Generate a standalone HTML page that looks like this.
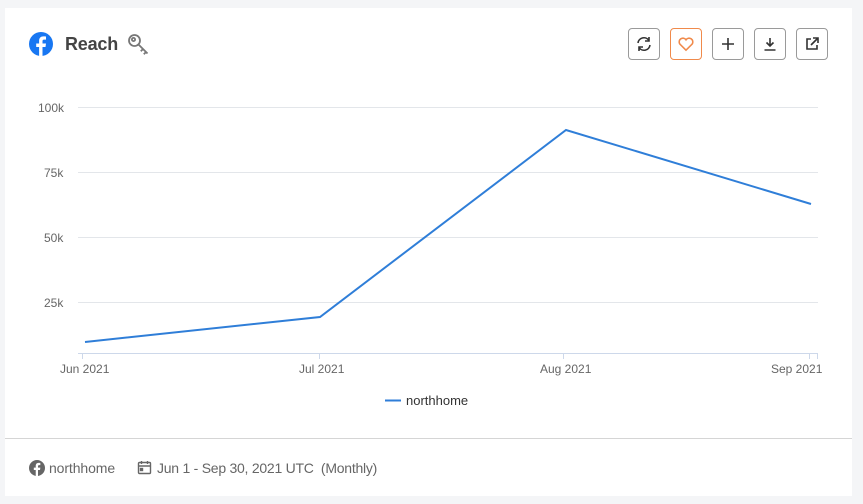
<!DOCTYPE html>
<html><head><meta charset="utf-8"><style>
body{margin:0;width:863px;height:504px;background:#f4f5f7;font-family:"Liberation Sans",sans-serif;position:relative;overflow:hidden}
.card{position:absolute;left:5px;top:8px;width:847px;height:488px;background:#fff}
.btn{position:absolute;top:28px;width:32px;height:32px;border:1px solid #9a9a9a;border-radius:4px;box-sizing:border-box;display:flex;align-items:center;justify-content:center}
.t{position:absolute;font-size:12px;color:#666}
</style></head><body>
<div class="card"></div>
<svg style="position:absolute;left:29px;top:32px" width="24" height="24" viewBox="0 0 24 24"><circle cx="12" cy="12" r="12" fill="#1877f2"/><path d="M13.5 24V15h3l.5-3.5h-3.5V9.3c0-1 .3-1.7 1.8-1.7H17V4.5c-.3 0-1.4-.1-2.6-.1-2.6 0-4.3 1.6-4.3 4.4v2.7H7.2V15h2.9v9z" fill="#fff"/></svg>
<div style="position:absolute;left:65px;top:34px;font-size:18px;font-weight:bold;color:#444;letter-spacing:-0.2px">Reach</div>
<svg style="position:absolute;left:127px;top:33px" width="24" height="24" viewBox="0 0 24 24" fill="none" stroke="#777" stroke-width="1.8"><circle cx="7.5" cy="7.5" r="5.5"/><circle cx="6.5" cy="6.5" r="1.6"/><path d="M11.5 11.5l9 9M16 16l-2.2 2.2M19 19l-2.2 2.2"/></svg>
<div class="btn" style="left:628px"><svg width="18" height="18" viewBox="0 0 18 18" fill="none" stroke="#333" stroke-width="1.6"><path d="M3 8a6 6 0 0 1 11-2.5M15 10a6 6 0 0 1-11 2.5M14 2v4h-4M4 16v-4h4"/></svg></div>
<div class="btn" style="left:670px;border-color:#f08a4b"><svg width="18" height="18" viewBox="0 0 16 16" fill="none" stroke="#f08a4b" stroke-width="1.4"><path d="M8 13.5L2.5 8a3 3 0 0 1 5.5-3.7A3 3 0 0 1 13.5 8z"/></svg></div>
<div class="btn" style="left:712px"><svg width="16" height="16" viewBox="0 0 16 16" stroke="#333" stroke-width="1.6"><path d="M8 2v12M2 8h12"/></svg></div>
<div class="btn" style="left:754px"><svg width="16" height="16" viewBox="0 0 16 16" fill="none" stroke="#333" stroke-width="1.6"><path d="M8 2v8M4.5 6.5L8 10l3.5-3.5M2.5 14h11"/></svg></div>
<div class="btn" style="left:796px"><svg width="16" height="16" viewBox="0 0 16 16" fill="none" stroke="#333" stroke-width="1.6"><path d="M7 3H3v10h10V9M9 2h5v5M14 2L7 9"/></svg></div>
<svg style="position:absolute;left:0;top:0" width="863" height="504">
<g stroke="#e3e6ea" stroke-width="1"><path d="M78 107.5H818M78 172.5H818M78 237.5H818M78 302.5H818"/></g>
<path d="M78 353.5H818M82.5 353v6M319.5 353v6M563.5 353v6M809.5 353v6M817.5 353v6" stroke="#cdd8ea"/>
<polyline points="85,342 320,317 566,130 811,204" fill="none" stroke="#2f7ed8" stroke-width="2"/>
<path d="M385 400.5H401" stroke="#2f7ed8" stroke-width="2"/>
<path d="M5 438.5H852" stroke="#d5d5d5"/>
</svg>
<div class="t" style="left:38px;top:101px">100k</div>
<div class="t" style="left:44px;top:166px">75k</div>
<div class="t" style="left:44px;top:231px">50k</div>
<div class="t" style="left:44px;top:296px">25k</div>
<div class="t" style="left:60px;top:362px">Jun 2021</div>
<div class="t" style="left:299px;top:362px">Jul 2021</div>
<div class="t" style="left:540px;top:362px">Aug 2021</div>
<div class="t" style="left:771px;top:362px">Sep 2021</div>
<div style="position:absolute;left:406px;top:393px;font-size:13px;color:#333">northhome</div>
<svg style="position:absolute;left:29px;top:460px" width="16" height="16" viewBox="0 0 24 24"><circle cx="12" cy="12" r="12" fill="#666"/><path d="M13.5 24V15h3l.5-3.5h-3.5V9.3c0-1 .3-1.7 1.8-1.7H17V4.5c-.3 0-1.4-.1-2.6-.1-2.6 0-4.3 1.6-4.3 4.4v2.7H7.2V15h2.9v9z" fill="#fff"/></svg>
<div style="position:absolute;left:49px;top:460px;font-size:14px;color:#666;letter-spacing:-0.1px">northhome</div>
<svg style="position:absolute;left:137px;top:460px" width="15" height="15" viewBox="0 0 15 15" fill="none" stroke="#666" stroke-width="1.4"><rect x="1.5" y="2.5" width="12" height="11" rx="1"/><path d="M1.5 6h12M4.5 1v3M10.5 1v3"/><rect x="3.5" y="8.5" width="2" height="2" fill="#666"/></svg>
<div style="position:absolute;left:157px;top:460px;font-size:14px;color:#666;letter-spacing:-0.25px">Jun 1 - Sep 30, 2021 UTC &nbsp;(Monthly)</div>
</body></html>
